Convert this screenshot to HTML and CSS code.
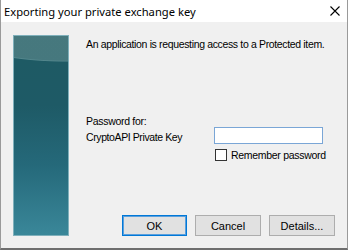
FILE: index.html
```html
<!DOCTYPE html>
<html>
<head>
<meta charset="utf-8">
<link rel="stylesheet" href="styles.css">
</head>
<body>
<div class="window">
  <div class="titlebar">
    <span class="title">Exporting your private exchange key</span>
    <svg class="close" width="10" height="10" viewBox="0 0 10 10"><path d="M0.5 0.5 L9.5 9.5 M9.5 0.5 L0.5 9.5" stroke="#000" stroke-width="1.1" fill="none"/></svg>
  </div>
  <div class="content">
    <div class="banner"></div>
    <div class="main">
      <div class="intro">An application is requesting access to a Protected item.</div>
      <div class="form">
        <div class="pwfor">Password for:</div>
        <div class="pwrow">
          <span class="keyname">CryptoAPI Private Key</span>
          <span class="input"></span>
        </div>
        <div class="remember">
          <span class="checkbox"></span>
          <span>Remember password</span>
        </div>
      </div>
      <div class="buttons">
        <span class="btn default">OK</span>
        <span class="btn">Cancel</span>
        <span class="btn">Details...</span>
      </div>
    </div>
  </div>
</div>
</body>
</html>
```

FILE: styles.css
```css
html, body {
  margin: 0;
  padding: 0;
  background: #f0f0f0;
}
.window {
  width: 348px;
  height: 250px;
  box-sizing: border-box;
  border: 1px solid #9a9a9a;
  border-top: none;
  border-bottom: 2px solid #6e6e6e;
  background: #f0f0f0;
  display: flex;
  flex-direction: column;
  font-family: "Liberation Sans", Arial, sans-serif;
  font-size: 10.5px;
  color: #000;
}
.titlebar {
  height: 22px;
  background: #fff;
  display: flex;
  align-items: center;
  justify-content: space-between;
  padding: 0 7px 0 3px;
}
.title {
  font-family: "Noto Sans", "Open Sans", sans-serif;
  font-size: 11.2px;
  color: #000;
}
.close {
  display: block;
}
.content {
  display: flex;
  padding: 13px 11px 0 12px;
}
.banner {
  width: 56px;
  height: 201px;
  box-sizing: border-box;
  border: 1px solid #7fb0bb;
  background:
    radial-gradient(ellipse 110px 30px at 95% -4px, rgba(110,150,152,0.5) 94%, rgba(160,200,200,0.4) 97%, transparent 100%),
    linear-gradient(to bottom, #1e5a63 0%, #1e5a66 35%, #25697a 65%, #3a8799 100%);
  flex: none;
}
.main {
  flex: 1;
  margin-left: 17px;
  height: 201px;
  display: flex;
  flex-direction: column;
}
.intro {
  margin-top: 3px;
  line-height: 13px;
  white-space: nowrap;
  letter-spacing: -0.35px;
}
.form {
  margin-top: 65px;
}
.pwfor {
  line-height: 11px;
  height: 11px;
  letter-spacing: -0.3px;
}
.pwrow {
  display: flex;
  align-items: center;
  height: 17px;
}
.keyname {
  width: 128px;
  padding-top: 3px;
  letter-spacing: -0.4px;
}
.input {
  width: 109px;
  height: 17px;
  box-sizing: border-box;
  border: 1px solid #7aa6d6;
  background: #fff;
}
.remember {
  display: flex;
  align-items: center;
  margin-top: 5px;
  margin-left: 129px;
  gap: 4px;
  letter-spacing: -0.3px;
}
.checkbox {
  width: 12px;
  height: 12px;
  box-sizing: border-box;
  border: 1px solid #333;
  background: #fff;
}
.buttons {
  margin-top: auto;
  display: flex;
  justify-content: flex-end;
  gap: 8px;
  padding-right: 1px;
}
.btn {
  width: 66px;
  height: 21px;
  box-sizing: border-box;
  border: 1px solid #adadad;
  background: #e1e1e1;
  display: flex;
  align-items: center;
  justify-content: center;
  font-size: 11px;
}
.btn.default {
  width: 65px;
  border: 1px solid #0078d7;
  box-shadow: inset 0 0 0 1px #5a9fdd;
}
```
